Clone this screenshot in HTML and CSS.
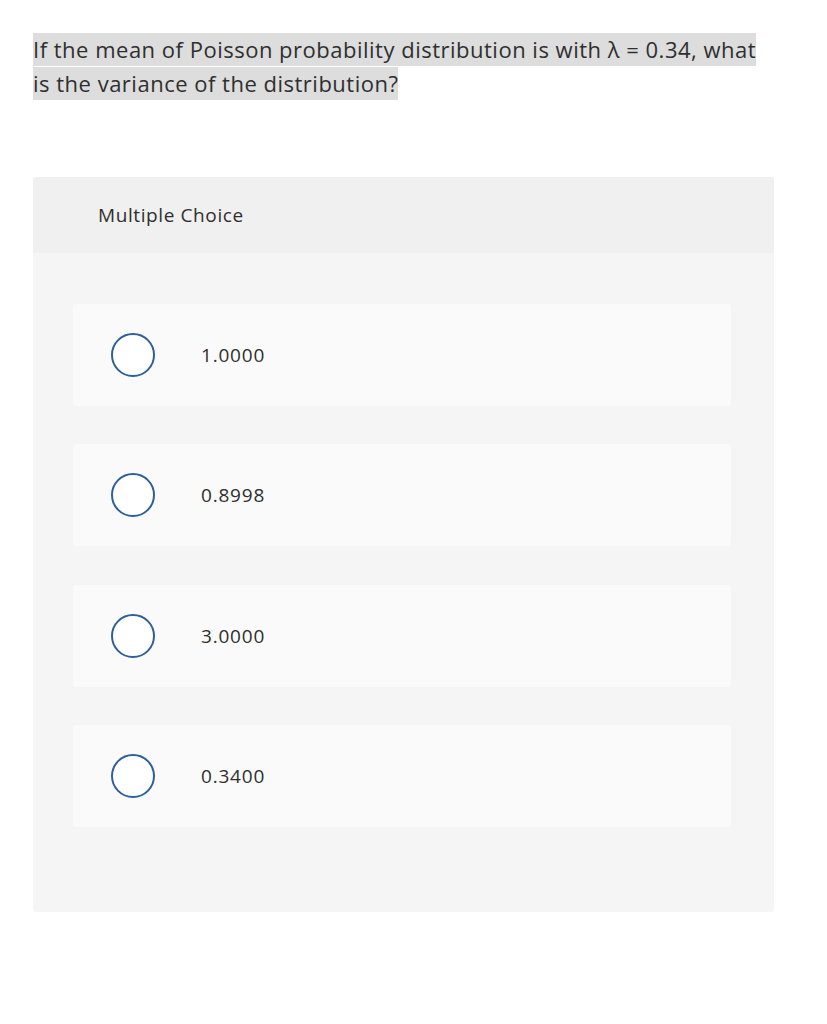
FILE: index.html
```html
<!DOCTYPE html>
<html lang="en">
<head>
<meta charset="utf-8">
<title>Multiple Choice</title>
<link rel="stylesheet" href="styles.css">
</head>
<body>
<div class="page">
  <p class="question"><span class="q-text">If the mean of Poisson probability distribution is with λ = 0.34, what is the variance of the distribution?</span></p>
  <div class="card">
    <div class="card-head">Multiple Choice</div>
    <div class="options">
      <div class="option"><span class="radio"></span><span class="opt-text">1.0000</span></div>
      <div class="option"><span class="radio"></span><span class="opt-text">0.8998</span></div>
      <div class="option"><span class="radio"></span><span class="opt-text">3.0000</span></div>
      <div class="option"><span class="radio"></span><span class="opt-text">0.3400</span></div>
    </div>
  </div>
</div>
</body>
</html>
```
FILE: styles.css
```css
html, body {
  margin: 0;
  padding: 0;
  background: #ffffff;
}
body {
  font-family: "Open Sans", "Lato", sans-serif;
  color: #2f2f2f;
}
.page {
  padding: 32px 53px 0 33px;
}
.question {
  margin: 0;
  width: 740px;
  font-size: 22px;
  line-height: 34px;
  letter-spacing: 0.5px;
}
.q-text {
  background: #dddddd;
  padding: 1px 0 2px;
}
.card {
  margin-top: 77px;
  width: 741px;
  background: #f5f5f5;
  border-radius: 3px;
  overflow: hidden;
}
.card-head {
  height: 76px;
  display: flex;
  align-items: center;
  padding-left: 65px;
  background: #f0f0f0;
  font-size: 19px;
  letter-spacing: 0.6px;
}
.options {
  display: flex;
  flex-direction: column;
  gap: 38.4px;
  padding: 51px 43px 85px 40px;
}
.option {
  height: 102px;
  display: flex;
  align-items: center;
  padding-left: 38px;
  background: #fafafa;
  border-radius: 4px;
}
.radio {
  width: 40px;
  height: 40px;
  border: 2px solid #2e5f99;
  border-radius: 50%;
  background: #ffffff;
  flex: none;
}
.opt-text {
  margin-left: 46px;
  font-size: 19px;
  letter-spacing: 0.8px;
}
```
